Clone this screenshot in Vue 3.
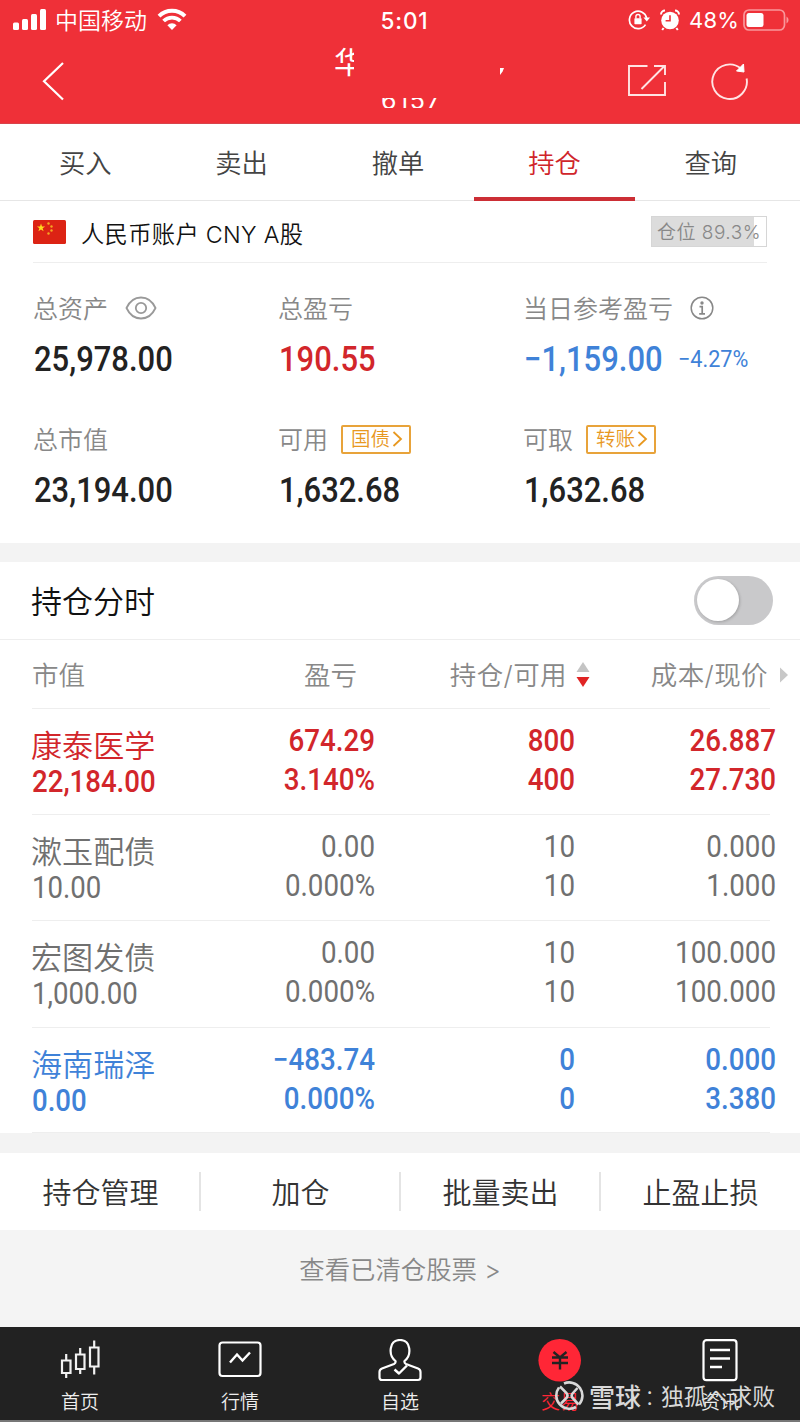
<template>
  <div class="page">
    <header class="header">
      <div class="status-bar">
        <div class="status-left">
          <svg class="signal" width="34" height="22" viewBox="0 0 34 22" fill="#fff">
            <rect x="0" y="13.5" width="6" height="7.5" rx="1.5" />
            <rect x="9" y="10" width="6" height="11" rx="1.5" />
            <rect x="18" y="5" width="6" height="16" rx="1.5" />
            <rect x="27" y="0" width="6" height="21" rx="1.5" />
          </svg>
          <span class="carrier">中国移动</span>
          <svg class="wifi" width="30" height="22" viewBox="0 0 30 22">
            <path d="M2 8.2A18.5 18.5 0 0 1 28 8.2" fill="none" stroke="#fff" stroke-width="4" />
            <path d="M6.6 13A12 12 0 0 1 23.4 13" fill="none" stroke="#fff" stroke-width="3.8" />
            <path d="M10.4 17.2A6.6 6.6 0 0 1 19.6 17.2L15 22Z" fill="#fff" />
          </svg>
        </div>
        <span class="clock">5:01</span>
        <div class="status-right">
          <svg width="22" height="22" viewBox="0 0 22 22">
            <path d="M17.5 15.6A8.7 8.7 0 1 1 18.6 9" fill="none" stroke="#fff" stroke-width="1.7" />
            <path d="M15.4 8.4H22L18.8 12.4Z" fill="#fff" />
            <rect x="6.4" y="9.2" width="7.2" height="6" rx="0.6" fill="#fff" />
            <path d="M7.9 9.5V7.6a2.1 2.1 0 0 1 4.2 0v1.9" fill="none" stroke="#fff" stroke-width="1.4" />
          </svg>
          <svg class="alarm" width="20" height="22" viewBox="0 0 20 22">
            <circle cx="10" cy="11.5" r="8.8" fill="#fff" />
            <path d="M10 6.2v5.6H5.6" fill="none" stroke="#ef3038" stroke-width="1.6" />
            <path d="M1 5.5A4 4 0 0 1 5 1.6M19 5.5A4 4 0 0 0 15 1.6M3.6 19l-1.4 2M16.4 19l1.4 2" fill="none" stroke="#fff" stroke-width="2" />
          </svg>
          <span class="percent">48%</span>
          <svg width="47" height="22" viewBox="0 0 47 22">
            <rect x="1" y="1" width="40.5" height="20" rx="5" fill="none" stroke="#f9969a" stroke-width="1.7" />
            <rect x="3.5" y="4" width="17" height="14" rx="2.5" fill="#fff" />
            <path d="M43.5 7.5a4 4 0 0 1 0 7Z" fill="#f9969a" />
          </svg>
        </div>
      </div>
      <div class="nav">
        <svg class="back" width="24" height="40" viewBox="0 0 24 40">
          <path d="M22 2L3 20.3L22 38.5" fill="none" stroke="#fff" stroke-width="2.2" />
        </svg>
        <div class="title">
          <div class="name-clip">华</div>
          <svg class="mark" width="6" height="8" viewBox="0 0 6 8"><path d="M1 0H5L3.6 3.5L1 7Z" fill="#fff" /></svg>
          <div class="account-clip"><span>6157</span></div>
        </div>
        <div class="nav-icons">
          <svg width="40" height="36" viewBox="0 0 40 36" fill="none" stroke="#ffe4e4" stroke-width="1.9">
            <path d="M20.5 4H2V33H38V20" />
            <path d="M14.5 27L37.5 4M27 4H38V13" />
          </svg>
          <svg width="40" height="40" viewBox="0 0 40 40">
            <path d="M36.6 16.5A17.3 17.3 0 1 1 31 6.7" fill="none" stroke="#ffe4e4" stroke-width="1.9" />
            <path d="M33.5 2L34 10L26.5 9Z" fill="#fff" stroke="#fff" />
          </svg>
        </div>
      </div>
    </header>

    <nav class="tabs">
      <div
        v-for="tab in tabs"
        :key="tab"
        class="tab"
        :class="{ active: tab === activeTab }"
        @click="activeTab = tab"
      >
        {{ tab }}
      </div>
    </nav>

    <section class="account">
      <svg class="flag" width="33" height="24" viewBox="0 0 33 24">
        <rect width="33" height="24" rx="1.5" fill="#dc2314" />
        <path d="M8 3.4l1 3h3.1l-2.5 1.8 1 3L8 9.4l-2.6 1.8 1-3L3.9 6.4H7Z" fill="#ffdc1e" />
        <g fill="#f5a623">
          <circle cx="15.5" cy="3.5" r="1.2" />
          <circle cx="18.5" cy="6.5" r="1.2" />
          <circle cx="18.5" cy="10.5" r="1.2" />
          <circle cx="15.5" cy="13.5" r="1.2" />
        </g>
      </svg>
      <span class="account-name">人民币账户 CNY A股</span>
      <div class="position">
        <div class="position-fill" :style="{ width: position + '%' }"></div>
        <span>仓位 {{ position }}%</span>
      </div>
    </section>

    <section class="summary">
      <div v-for="item in summary" :key="item.label" class="summary-item">
        <div class="summary-label">
          <span>{{ item.label }}</span>
          <svg v-if="item.icon === 'eye'" class="eye" width="32" height="24" viewBox="0 0 32 24" fill="none" stroke="#999" stroke-width="1.8">
            <path d="M1.5 12C8-2 24-2 30.5 12C24 26 8 26 1.5 12Z" />
            <circle cx="16" cy="12" r="5.2" />
          </svg>
          <svg v-if="item.icon === 'info'" class="info" width="24" height="24" viewBox="0 0 24 24" fill="none" stroke="#888">
            <circle cx="12" cy="12" r="10.8" stroke-width="1.5" />
            <circle cx="12" cy="7" r="1.7" fill="#888" stroke="none" />
            <path d="M9.5 10.7h2.7v7M9.2 17.8h5.8" stroke-width="1.7" />
          </svg>
          <span v-if="item.link" class="link">
            {{ item.link }}
            <svg width="11" height="16" viewBox="0 0 11 16"><path d="M1.5 1L9 8L1.5 15" fill="none" stroke="#e8981f" stroke-width="1.8" /></svg>
          </span>
        </div>
        <div class="summary-value" :class="item.color">
          <span class="num">{{ item.value }}</span>
          <span v-if="item.rate" class="rate">{{ item.rate }}</span>
        </div>
      </div>
    </section>

    <section class="chart-row">
      <span>持仓分时</span>
      <div class="switch" :class="{ on: showChart }" @click="showChart = !showChart"></div>
    </section>

    <section class="holdings">
      <div class="thead">
        <div>市值</div>
        <div class="profit-head">盈亏</div>
        <div class="amount-head">
          持仓/可用
          <svg width="14" height="26" viewBox="0 0 14 26">
            <path d="M7 0L13.5 10H0.5Z" fill="#c4c4c4" />
            <path d="M7 25L13.5 15H0.5Z" fill="#e02424" />
          </svg>
        </div>
        <div class="price-head">
          成本/现价
          <svg width="8" height="16" viewBox="0 0 8 16"><path d="M0 0.5L8 8L0 15.5Z" fill="#c8c8c8" /></svg>
        </div>
      </div>
      <div v-for="row in holdings" :key="row.name" class="row" :class="row.color">
        <div class="stock">
          <div class="stock-name">{{ row.name }}</div>
          <div class="num">{{ row.value }}</div>
        </div>
        <div v-for="(cell, i) in row.cells" :key="i" class="cell">
          <div class="num">{{ cell[0] }}</div>
          <div class="num">{{ cell[1] }}</div>
        </div>
      </div>
    </section>

    <section class="actions">
      <div v-for="action in actions" :key="action" class="action">{{ action }}</div>
    </section>

    <div class="cleared">查看已清仓股票 &gt;</div>

    <footer class="tabbar">
      <div class="tabbar-item">
        <svg width="42" height="46" viewBox="0 0 42 46" fill="none" stroke="#f2f2f2" stroke-width="2.2">
          <path d="M3 21.5h8.5v12.5H3ZM7.2 15v6.5M7.2 34v5M17 15.5h8.5v14.5H17ZM21.2 9v6.5M21.2 30v5M31 8.500h8.500v19H31ZM35.200 1.500v7M35.200 27.500v8" />
        </svg>
        <span>首页</span>
      </div>
      <div class="tabbar-item">
        <svg width="44" height="46" viewBox="0 0 44 46" fill="none" stroke="#fff" stroke-width="2.2">
          <rect x="1.5" y="3.5" width="41" height="33.5" rx="3" />
          <path d="M12 23.5L19 15.5L24.5 21.5L32 13.5" stroke-width="2.4" />
        </svg>
        <span>行情</span>
      </div>
      <div class="tabbar-item">
        <svg width="44" height="46" viewBox="0 0 44 46" fill="none" stroke="#fff" stroke-width="2.2" stroke-linejoin="round">
          <path d="M17.5 22C10 16 11 1 22 1S34 16 26.5 22Q26 24 28 25L40 29.5Q42.5 30.5 42.5 33V38.5Q42.5 41 40 41H4Q1.5 41 1.5 38.5V33Q1.5 30.5 4 29.5L16 25Q18 24 17.5 22Z" />
          <path d="M16.5 30.5L21 34.5L29 26.5" stroke-width="2.4" />
        </svg>
        <span>自选</span>
      </div>
      <div class="tabbar-item active">
        <svg width="44" height="46" viewBox="0 0 44 46">
          <circle cx="21.7" cy="21.3" r="21.3" fill="#ff2636" />
          <path d="M15.5 13L22 18.5L28.5 13M14 18.5h16M14 24h16M22 18.5v12" fill="none" stroke="#242222" stroke-width="2.4" />
        </svg>
        <span>交易</span>
      </div>
      <div class="tabbar-item">
        <svg width="44" height="46" viewBox="0 0 44 46" fill="none" stroke="#fff" stroke-width="2.2">
          <rect x="5.5" y="1.2" width="33" height="40" rx="3" />
          <path d="M12 11h20M12 19.5h20M12 28h12" stroke-width="2.4" />
        </svg>
        <span>资讯</span>
      </div>
      <div class="watermark">
        <svg width="30" height="30" viewBox="0 0 30 30" fill="none" stroke="#d8d8d8" stroke-width="2.6">
          <path d="M10 2.5A13.2 13.2 0 0 1 25 23.5M22 26A13.2 13.2 0 0 1 5 6.5" />
          <path d="M6 5.5L12.5 12Q14.5 14.500 12.500 17L7 22.500M23.500 7L18.500 12.500Q16.800 14.500 18.500 17L24.500 23.500" />
        </svg>
        <span class="brand">雪球</span>
        <span class="colon">:</span>
        <span class="author">独孤へ求败</span>
      </div>
    </footer>
  </div>
</template>

<script setup>
import { ref } from 'vue'

const tabs = ['买入', '卖出', '撤单', '持仓', '查询']
const activeTab = ref('持仓')
const position = 89.3
const showChart = ref(false)

const summary = [
  { label: '总资产', value: '25,978.00', icon: 'eye' },
  { label: '总盈亏', value: '190.55', color: 'red' },
  { label: '当日参考盈亏', value: '−1,159.00', rate: '−4.27%', icon: 'info', color: 'blue' },
  { label: '总市值', value: '23,194.00' },
  { label: '可用', value: '1,632.68', link: '国债' },
  { label: '可取', value: '1,632.68', link: '转账' }
]

const holdings = [
  { name: '康泰医学', value: '22,184.00', color: 'red', cells: [['674.29', '3.140%'], ['800', '400'], ['26.887', '27.730']] },
  { name: '漱玉配债', value: '10.00', color: 'gray', cells: [['0.00', '0.000%'], ['10', '10'], ['0.000', '1.000']] },
  { name: '宏图发债', value: '1,000.00', color: 'gray', cells: [['0.00', '0.000%'], ['10', '10'], ['100.000', '100.000']] },
  { name: '海南瑞泽', value: '0.00', color: 'blue', cells: [['−483.74', '0.000%'], ['0', '0'], ['0.000', '3.380']] }
]

const actions = ['持仓管理', '加仓', '批量卖出', '止盈止损']
</script>

<style>
body { background: #fff; }
</style>

<style scoped>
.page {
  width: 800px;
  height: 1422px;
  overflow: hidden;
  background: #fff;
  color: #222;
  font-family: Inter, "Noto Sans CJK SC", sans-serif;
  font-weight: 350;
}
.page * { box-sizing: border-box; }
svg { display: block; flex: none; }

.header { height: 124px; background: #ef3038; color: #fff; border-bottom: 1px solid #d8434a; }
.status-bar {
  display: grid;
  grid-template-columns: 1fr auto 1fr;
  align-items: center;
  height: 40px;
  padding: 0 10px 0 13px;
}
.status-left, .status-right { display: flex; align-items: center; }
.status-right { justify-content: flex-end; }
.carrier { margin-left: 8px; padding-top: 2px; font-size: 23px; line-height: 38px; }
.wifi { margin-left: 10px; margin-bottom: 2px; }
.clock { font-size: 22.5px; font-weight: 500; letter-spacing: 0.8px; margin-left: 6px; }
.alarm { margin-left: 10px; }
.percent { margin: 0 4px 0 9px; font-size: 22px; font-weight: 400; letter-spacing: 0.2px; }

.nav { display: grid; grid-template-columns: 300px 1fr 173px; height: 83px; padding-left: 41px; }
.back { margin-top: 21px; }
.title { display: grid; grid-template-columns: 159px 1fr; grid-template-rows: 58px 1fr; margin-left: -7px; }
.name-clip { width: 20px; height: 32px; margin-top: 6px; overflow: hidden; font-size: 30px; line-height: 32px; font-weight: 400; }
.mark { margin: 28px 0 0 6px; }
.account-clip { display: flex; align-items: flex-end; height: 10px; width: 62px; margin-left: 47px; overflow: hidden; font-size: 25px; line-height: 15px; font-weight: 400; letter-spacing: 1.5px; }
.nav-icons { display: flex; gap: 43px; padding-top: 22px; }

.tabs { display: flex; height: 77px; padding: 0 11px 0 7px; border-bottom: 1px solid #e6e6e6; }
.tab { position: relative; flex: 1; text-align: center; font-size: 26.3px; line-height: 80px; color: #444; }
.tab.active { color: #d0252a; }
.tab.active::after { content: ''; position: absolute; left: -2px; right: -2px; bottom: -1px; height: 4px; background: #cc2e35; }

.account { display: flex; align-items: center; height: 62px; margin: 0 33px; border-bottom: 1px solid #eee; }
.account-name { margin-left: 15px; padding-top: 2px; font-size: 23.3px; letter-spacing: 0.3px; color: #111; white-space: nowrap; }
.position {
  position: relative;
  width: 116px;
  height: 31px;
  margin-left: auto;
  border: 1px solid #d6d6d6;
  font-size: 19px;
  line-height: 32px;
  letter-spacing: 0.5px;
  text-align: center;
  color: #888;
}
.position-fill { position: absolute; left: 0; top: 0; height: 100%; background: #dcdcdc; }
.position span { position: relative; white-space: nowrap; }

.summary {
  display: grid;
  grid-template-columns: 245px 245px 1fr;
  grid-auto-rows: 131px;
  height: 299px;
  padding: 28px 0 0 33px;
  border-bottom: 19px solid #f3f3f3;
}
.summary-label { display: flex; align-items: center; height: 34px; font-size: 25px; line-height: 34px; color: #888; white-space: nowrap; }
.summary-label > span:first-child { margin-top: 1px; }
.eye { margin-left: 17px; }
.info { margin-left: 17px; }
.link {
  display: flex;
  align-items: center;
  gap: 2px;
  height: 29px;
  margin-left: 13px;
  padding: 0 6px 0 8px;
  border: 2px solid #e8a33a;
  border-radius: 2px;
  color: #e8981f;
  font-size: 19.5px;
  line-height: 27px;
}
.summary-value { display: flex; align-items: center; height: 68px; padding-left: 1px; font-size: 35px; white-space: nowrap; }
.num { font-family: Roboto, sans-serif; font-weight: 500; transform: scaleX(0.885); transform-origin: left; }
.rate { margin-left: -3px; font-family: Roboto, sans-serif; font-size: 23px; font-weight: 400; transform: scaleX(0.94); transform-origin: left; }
.red { color: #d2262b; }
.blue { color: #3f82d8; }
.gray { color: #707070; }

.chart-row {
  display: flex;
  align-items: center;
  justify-content: space-between;
  height: 78px;
  padding: 0 27px 0 31px;
  border-bottom: 1px solid #eee;
  font-size: 31px;
  color: #111;
}
.chart-row span { margin-top: -3px; }
.switch { width: 79px; height: 49px; padding: 3px; border-radius: 25px; background: #c9c9cb; }
.switch::before { content: ''; display: block; width: 42px; height: 42px; border-radius: 50%; background: #fff; box-shadow: 1px 1px 3px rgba(0, 0, 0, 0.2); }
.switch.on { background: #4cd964; }
.switch.on::before { margin-left: auto; }

.holdings { padding-left: 32px; }
.thead, .row { display: grid; grid-template-columns: 143px 200px 200px 201px; }
.thead { height: 69px; line-height: 70px; font-size: 26.5px; color: #888; white-space: nowrap; }
.thead, .row { background: linear-gradient(#eee, #eee) left bottom / 738px 1px no-repeat; }
.profit-head { padding-right: 18px; text-align: right; }
.amount-head, .price-head { display: flex; align-items: center; justify-content: flex-end; letter-spacing: 0.4px; }
.amount-head { gap: 9px; margin-right: -15px; }
.price-head { gap: 12px; margin-right: -12px; }
.row { height: 106.2px; font-size: 30.5px; white-space: nowrap; }
.row:last-child { height: 105.4px; }
.row .num { height: 39px; line-height: 39px; transform: scaleX(0.905); }
.stock { padding-top: 16px; }
.stock-name { height: 37px; margin-left: -1px; font-size: 31.1px; line-height: 43px; }
.cell { padding-top: 12px; text-align: right; }
.row .cell .num { transform: scaleX(0.91); transform-origin: right; }
.gray .num { font-weight: 400; }

.actions { display: flex; height: 97px; border-top: 20px solid #f3f3f3; align-items: center; }
.action { position: relative; flex: 1; height: 39px; line-height: 44px; padding-left: 1px; text-align: center; font-size: 29px; color: #333; }
.action + .action::before { content: ''; position: absolute; left: -1px; top: 0; width: 2px; height: 39px; background: #e4e4e4; }

.cleared { height: 97px; background: #f4f4f4; text-align: center; font-size: 25.4px; line-height: 80px; color: #888; }

.tabbar { position: relative; display: flex; height: 95px; background: #222; border-bottom: 2px solid #777; color: #eee; }
.tabbar-item { display: flex; flex: 1; flex-direction: column; align-items: center; padding-top: 12px; font-size: 19px; line-height: 35px; }
.tabbar-item.active { color: #ff2636; }
.watermark { position: absolute; left: 554px; top: 53px; display: flex; align-items: center; height: 32px; color: #d8d8d8; white-space: nowrap; }
.brand { width: 59px; padding-left: 5px; font-size: 26px; font-weight: 500; }
.colon { width: 18px; padding-left: 3px; font-size: 26px; }
.author { font-size: 22.8px; font-weight: 400; }
</style>
